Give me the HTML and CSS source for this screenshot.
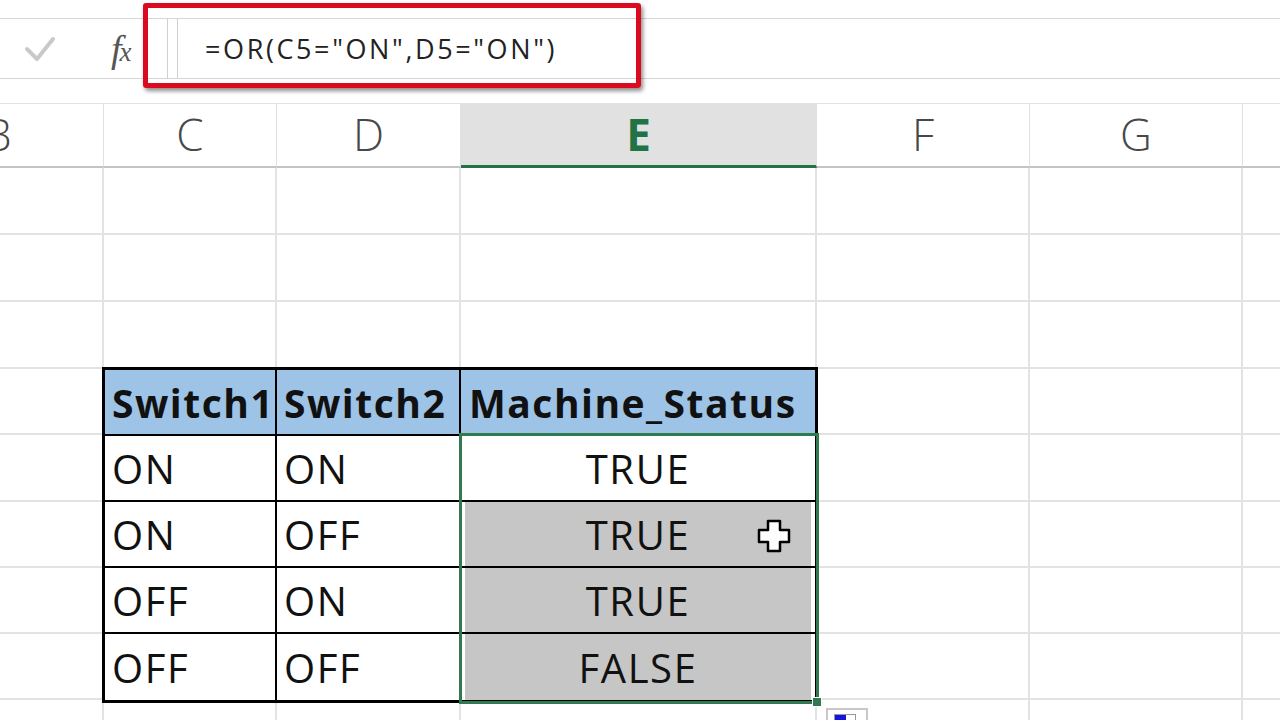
FILE: index.html
```html
<!DOCTYPE html>
<html>
<head>
<meta charset="utf-8">
<link rel="stylesheet" href="styles.css">
</head>
<body>
<div class="app">
  <div class="fbar">
    <div class="band">
      <div class="check">
        <svg width="34" height="28" viewBox="0 0 34 28"><polyline points="4,14 14,24 30,4" fill="none" stroke="#c9c9c9" stroke-width="4" stroke-linejoin="round" stroke-linecap="round"/></svg>
      </div>
      <div class="fx">f<span class="x">x</span></div>
      <div class="sep"></div>
      <div class="input">=OR(C5="ON",D5="ON")</div>
    </div>
    <div class="redbox"></div>
  </div>

  <div class="sheet">
    <div class="ch chb"><span>B</span></div>
    <div class="ch">C</div>
    <div class="ch">D</div>
    <div class="ch sel">E</div>
    <div class="ch">F</div>
    <div class="ch">G</div>
    <div class="ch"></div>

    <div class="tbl">
      <div class="tc th">Switch1</div>
      <div class="tc th">Switch2</div>
      <div class="tc th last">Machine_Status</div>

      <div class="tc">ON</div>
      <div class="tc">ON</div>
      <div class="tc last ctr">TRUE</div>

      <div class="tc">ON</div>
      <div class="tc">OFF</div>
      <div class="tc last ctr grey">TRUE</div>

      <div class="tc">OFF</div>
      <div class="tc">ON</div>
      <div class="tc last ctr grey">TRUE</div>

      <div class="tc bot">OFF</div>
      <div class="tc bot">OFF</div>
      <div class="tc last bot ctr grey">FALSE</div>

      <div class="selbox"></div>
      <div class="handle"></div>
    </div>

    <div class="c"></div><div class="c"></div><div class="c"></div><div class="c"></div><div class="c"></div><div class="c"></div><div class="c"></div>
    <div class="c"></div><div class="c"></div><div class="c"></div><div class="c"></div><div class="c"></div><div class="c"></div><div class="c"></div>
    <div class="c"></div><div class="c"></div><div class="c"></div><div class="c"></div><div class="c"></div><div class="c"></div><div class="c"></div>
    <div class="c"></div><div class="c"></div><div class="c"></div><div class="c"></div>
    <div class="c"></div><div class="c"></div><div class="c"></div><div class="c"></div>
    <div class="c"></div><div class="c"></div><div class="c"></div><div class="c"></div>
    <div class="c"></div><div class="c"></div><div class="c"></div><div class="c"></div>
    <div class="c"></div><div class="c"></div><div class="c"></div><div class="c"></div>
    <div class="c"></div><div class="c"></div><div class="c"></div><div class="c"></div><div class="c"></div><div class="c"></div><div class="c"></div>
  </div>

  <div class="cursor">
    <svg width="36" height="36" viewBox="0 0 36 36"><path d="M12 3 H24 V12 H33 V24 H24 V33 H12 V24 H3 V12 H12 Z" fill="#fff" stroke="#000" stroke-width="2.5" stroke-linejoin="round"/></svg>
  </div>
  <div class="qa"><div class="qa-in"></div></div>
</div>
</body>
</html>
```

FILE: styles.css
```css
* { box-sizing: border-box; }
html, body { margin: 0; padding: 0; background: #fff; }
body { width: 1280px; height: 720px; overflow: hidden; font-family: "Open Sans", "Lato", "Liberation Sans", sans-serif; }
.app { position: relative; width: 1280px; height: 720px; overflow: hidden; }

.fbar { position: relative; height: 103px; background: #fff; padding-top: 18px; }
.band { display: flex; align-items: stretch; height: 61px; border-top: 1px solid #d6d6d6; border-bottom: 1px solid #d6d6d6; }
.check { width: 104px; display: flex; align-items: center; padding-left: 23px; }
.fx { width: 63px; display: flex; align-items: center; padding-left: 7px; font-family: "Liberation Serif", "DejaVu Serif", serif; font-style: italic; font-size: 38px; color: #555; letter-spacing: -2px; }
.fx .x { font-size: 27px; margin-top: 8px; }
.sep { width: 10px; border-left: 1px solid #d0d0d0; }
.input { flex: 1; border-left: 1px solid #d0d0d0; padding-left: 27px; display: flex; align-items: center; font-size: 27px; color: #222; letter-spacing: 2.6px; }
.redbox { position: absolute; left: 143px; top: 3px; width: 498px; height: 85px; border: 5px solid #dc0a1e; border-radius: 3px; box-shadow: 2px 3px 4px rgba(0,0,0,0.45); }

.sheet { display: grid; grid-template-columns: 104px 173px 184px 356px 213px 213px 100px; grid-template-rows: 64px 67px 67px 67px 66px 67px 66px 66px 66px 66px; border-top: 1px solid #e2e2e2; }
.ch { display: flex; align-items: center; justify-content: center; font-size: 44px; font-weight: 300; color: #484848; border-right: 1px solid #e0e0e0; border-bottom: 2px solid #c4c4c4; padding-bottom: 2px; }
.chb { justify-content: flex-start; overflow: hidden; }
.chb span { margin-left: -16px; }
.ch.sel { background: #e1e1e1; color: #217346; font-weight: 700; border-bottom: 3px solid #217346; }
.c { border-right: 2px solid #e3e3e3; border-bottom: 2px solid #e3e3e3; }

.tbl { position: relative; grid-column: 2 / 5; grid-row: 5 / 10; margin: -2px -1px -3px -2px; border: 3px solid #000; display: grid; grid-template-columns: 172px 184px 354px; grid-template-rows: 66px 66px 66px 66px 66px; }
.tc { border-right: 2px solid #000; border-bottom: 2px solid #000; display: flex; align-items: center; padding-left: 7px; font-size: 40px; color: #111; background: #fff; white-space: nowrap; letter-spacing: 1.6px; }
.tc.last { border-right: none; }
.tc.bot { border-bottom: none; }
.tc.th { background: #9dc3e6; font-weight: 700; font-size: 39px; padding-left: 7px; letter-spacing: 1.5px; }
.tc.th.last { padding-left: 8px; }
.tc.ctr { justify-content: center; padding-left: 0; padding-right: 0; }
.tc.grey { background: #c6c6c6; box-shadow: inset 4px 0 0 #fff, inset -4px 0 0 #fff; }

.selbox { position: absolute; top: 63px; left: 354px; width: 360px; height: 271px; border: 3px solid #317a4f; pointer-events: none; }
.handle { position: absolute; left: 707px; top: 327px; width: 10px; height: 10px; background: #317a4f; border: 1px solid #fff; }

.cursor { position: absolute; left: 756px; top: 518px; width: 36px; height: 36px; }
.qa { position: absolute; left: 826px; top: 708px; width: 42px; height: 22px; border: 2px solid #c8c8c8; background: #fff; padding: 4px 0 0 6px; }
.qa-in { width: 22px; height: 14px; border: 1px solid #999; background: linear-gradient(90deg, #1515e0 0 55%, #fff 55%); }
```
